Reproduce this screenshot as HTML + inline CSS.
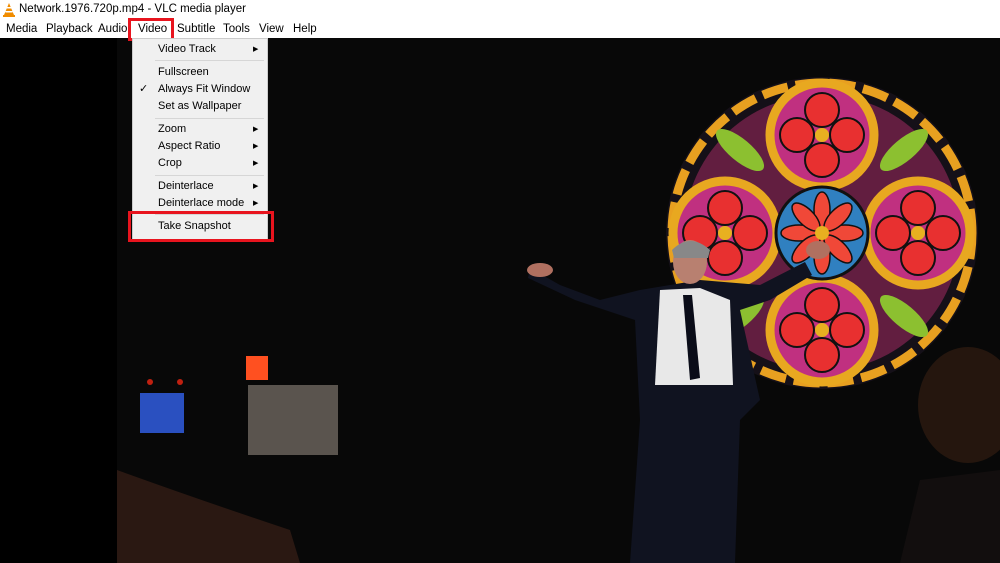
<!DOCTYPE html>
<html><head><style>
body{margin:0;width:1000px;height:563px;overflow:hidden;background:#000;font-family:"Liberation Sans",sans-serif;position:relative}
.t{position:absolute;font-size:11.5px;color:#000;white-space:nowrap}
#title{position:absolute;left:0;top:0;width:1000px;height:20px;background:#fff}
#menubar{position:absolute;left:0;top:20px;width:1000px;height:18px;background:#fff}
#video{position:absolute;left:117px;top:38px;width:883px;height:525px;background:#080808}
#menu{position:absolute;left:132px;top:38px;width:136px;height:203px;background:#f0f0f0;border:1px solid #ccc;box-sizing:border-box}
.sep{position:absolute;left:22px;right:3px;height:1px;background:#d6d6d6}
.mi{position:absolute;left:25px;font-size:11px;color:#000}
.ar{position:absolute;left:120px;font-size:7px;color:#000}
.red{position:absolute;border:3px solid #e8141e;box-sizing:border-box}
</style></head><body>
<div id="title">
<svg style="position:absolute;left:3px;top:3px" width="12" height="14" viewBox="0 0 12 14"><polygon points="6,0 11,12 1,12" fill="#f08c00"/><rect x="3.5" y="4" width="5" height="1.5" fill="#fff"/><rect x="2.5" y="8" width="7" height="1.5" fill="#fff"/><rect x="0" y="12" width="12" height="2" fill="#f08c00"/></svg>
<div class="t" style="left:19px;top:3px">Network.1976.720p.mp4 - VLC media player</div>
</div>
<div id="menubar">
<div class="t" style="left:6px;top:3px">Media</div>
<div class="t" style="left:46px;top:3px">Playback</div>
<div class="t" style="left:98px;top:3px">Audio</div>
<div class="t" style="left:138px;top:3px">Video</div>
<div class="t" style="left:177px;top:3px">Subtitle</div>
<div class="t" style="left:223px;top:3px">Tools</div>
<div class="t" style="left:259px;top:3px">View</div>
<div class="t" style="left:293px;top:3px">Help</div>
</div>
<div id="video">
<svg width="883" height="525" viewBox="117 38 883 525" style="position:absolute;left:0;top:0">
<g>
<circle cx="822" cy="233" r="156" fill="#151018"/>
<circle cx="822" cy="233" r="150" fill="none" stroke="#e8a020" stroke-width="9" stroke-dasharray="26 8"/>
<circle cx="822" cy="233" r="138" fill="#c03070" opacity=".45"/>
<g fill="#8cc030"><ellipse cx="740" cy="150" rx="30" ry="11" transform="rotate(40 740 150)"/><ellipse cx="904" cy="150" rx="30" ry="11" transform="rotate(-40 904 150)"/><ellipse cx="740" cy="316" rx="30" ry="11" transform="rotate(-40 740 316)"/><ellipse cx="904" cy="316" rx="30" ry="11" transform="rotate(40 904 316)"/></g>
<g stroke="#e8a820" stroke-width="9" fill="#c03080">
<circle cx="822" cy="135" r="52"/><circle cx="725" cy="233" r="52"/><circle cx="918" cy="233" r="52"/><circle cx="822" cy="330" r="52"/>
</g>
<circle cx="822" cy="233" r="46" fill="#3080c0" stroke="#111" stroke-width="3"/>
<g fill="#e83030" stroke="#111" stroke-width="2">
<circle cx="822" cy="110" r="17"/><circle cx="822" cy="160" r="17"/><circle cx="797" cy="135" r="17"/><circle cx="847" cy="135" r="17"/>
<circle cx="725" cy="208" r="17"/><circle cx="725" cy="258" r="17"/><circle cx="700" cy="233" r="17"/><circle cx="750" cy="233" r="17"/>
<circle cx="918" cy="208" r="17"/><circle cx="918" cy="258" r="17"/><circle cx="893" cy="233" r="17"/><circle cx="943" cy="233" r="17"/>
<circle cx="822" cy="305" r="17"/><circle cx="822" cy="355" r="17"/><circle cx="797" cy="330" r="17"/><circle cx="847" cy="330" r="17"/>
</g>
<g fill="#f04838" stroke="#111" stroke-width="1.5">
<ellipse cx="822" cy="210" rx="8" ry="18"/><ellipse cx="822" cy="256" rx="8" ry="18"/><ellipse cx="799" cy="233" rx="18" ry="8"/><ellipse cx="845" cy="233" rx="18" ry="8"/>
<ellipse cx="806" cy="217" rx="8" ry="18" transform="rotate(-45 806 217)"/><ellipse cx="838" cy="217" rx="8" ry="18" transform="rotate(45 838 217)"/><ellipse cx="806" cy="249" rx="8" ry="18" transform="rotate(45 806 249)"/><ellipse cx="838" cy="249" rx="8" ry="18" transform="rotate(-45 838 249)"/>
</g>
<g fill="#e8b020"><circle cx="822" cy="135" r="7"/><circle cx="725" cy="233" r="7"/><circle cx="918" cy="233" r="7"/><circle cx="822" cy="330" r="7"/><circle cx="822" cy="233" r="7"/></g>
</g>
<!-- man -->
<path d="M530 268 L560 285 L600 300 L640 290 L700 280 L760 285 L805 262 L812 275 L770 300 L740 310 L760 400 L740 420 L735 563 L630 563 L640 420 L635 320 L575 300 L528 278 Z" fill="#101320"/>
<path d="M660 290 L700 288 L730 300 L733 385 L655 385 Z" fill="#e8e8e8"/>
<path d="M683 295 L692 295 L700 378 L690 380 Z" fill="#0a0c18"/>
<ellipse cx="690" cy="262" rx="17" ry="22" fill="#b88070"/>
<path d="M672 250 Q690 232 710 250 L708 258 L674 258Z" fill="#888"/>
<ellipse cx="540" cy="270" rx="13" ry="7" fill="#b07060"/>
<ellipse cx="818" cy="250" rx="12" ry="9" fill="#b07060"/>
<!-- bottom right head -->
<ellipse cx="968" cy="405" rx="50" ry="58" fill="#25160e"/>
<path d="M900 563 L920 480 L1000 470 L1000 563Z" fill="#120e0e"/>
<!-- camera -->
<rect x="248" y="385" width="90" height="70" fill="#5a544e"/>
<rect x="246" y="356" width="22" height="24" fill="#ff5020"/>
<rect x="140" y="393" width="44" height="40" fill="#2a50c0"/>
<circle cx="150" cy="382" r="3" fill="#c02010"/><circle cx="180" cy="382" r="3" fill="#c02010"/>
<path d="M117 470 Q200 500 290 530 L300 563 L117 563Z" fill="#2a1812"/>
</svg>
</div>
<div class="red" style="left:128px;top:18px;width:46px;height:23px"></div>
<div id="menu">
<div class="mi" style="top:4px">Video Track</div><div class="ar" style="top:6px">▶</div>
<div class="sep" style="top:21px"></div>
<div class="mi" style="top:27px">Fullscreen</div>
<div class="mi" style="left:6px;top:43px;font-size:11px">✓</div>
<div class="mi" style="top:44px">Always Fit Window</div>
<div class="mi" style="top:61px">Set as Wallpaper</div>
<div class="sep" style="top:79px"></div>
<div class="mi" style="top:84px">Zoom</div><div class="ar" style="top:86px">▶</div>
<div class="mi" style="top:101px">Aspect Ratio</div><div class="ar" style="top:103px">▶</div>
<div class="mi" style="top:118px">Crop</div><div class="ar" style="top:120px">▶</div>
<div class="sep" style="top:136px"></div>
<div class="mi" style="top:141px">Deinterlace</div><div class="ar" style="top:143px">▶</div>
<div class="mi" style="top:158px">Deinterlace mode</div><div class="ar" style="top:160px">▶</div>
<div class="sep" style="top:175px"></div>
<div class="mi" style="top:181px">Take Snapshot</div>
</div>
<div class="red" style="left:128px;top:211px;width:146px;height:31px"></div>
</body></html>
